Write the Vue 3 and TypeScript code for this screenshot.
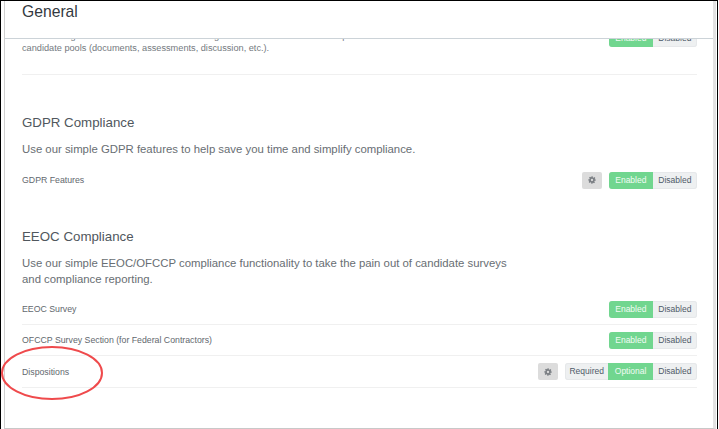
<script setup lang="ts">
interface Row {
  label: string
  options: string[]
  active: string
  gear?: boolean
}
const gdpr: Row[] = [{ label: 'GDPR Features', options: ['Enabled', 'Disabled'], active: 'Enabled', gear: true }]
const eeoc: Row[] = [
  { label: 'EEOC Survey', options: ['Enabled', 'Disabled'], active: 'Enabled' },
  { label: 'OFCCP Survey Section (for Federal Contractors)', options: ['Enabled', 'Disabled'], active: 'Enabled' },
  { label: 'Dispositions', options: ['Required', 'Optional', 'Disabled'], active: 'Optional', gear: true },
]
</script>

<template>
  <div class="frame">
    <div class="panel">
      <header class="head">General</header>
      <main class="content">
        <div class="intro">
          <p class="small wide">Enable hiring team members to view and manage all of the information in their private<br />candidate pools (documents, assessments, discussion, etc.).</p>
          <div class="group top">
            <button class="opt on">Enabled</button>
            <button class="opt">Disabled</button>
          </div>
        </div>

        <section class="sec gdpr">
          <h2>GDPR Compliance</h2>
          <p class="lead">Use our simple GDPR features to help save you time and simplify compliance.</p>
          <div v-for="r in gdpr" :key="r.label" class="row plain">
            <span class="small">{{ r.label }}</span>
            <div class="ctrl">
              <button v-if="r.gear" class="gear" aria-label="Settings">
                <svg viewBox="0 0 24 24" width="8" height="8"><path fill="#7b7f84" fill-rule="evenodd" d="M10 1h4l.6 3.2 1.9.8 2.7-1.8 2.8 2.8-1.8 2.7.8 1.9L23 10v4l-3.2.6-.8 1.9 1.8 2.7-2.8 2.8-2.7-1.8-1.9.8L14 23h-4l-.6-3.2-1.9-.8-2.7 1.8-2.8-2.8 1.8-2.7-.8-1.9L1 14v-4l3.2-.6.8-1.9-1.8-2.7 2.8-2.8 2.7 1.8 1.9-.8zM12 8.5a3.5 3.5 0 1 0 0 7 3.5 3.5 0 0 0 0-7z" /></svg>
              </button>
              <div class="group">
                <button v-for="o in r.options" :key="o" class="opt" :class="{ on: o === r.active }">{{ o }}</button>
              </div>
            </div>
          </div>
        </section>

        <section class="sec eeoc">
          <h2>EEOC Compliance</h2>
          <p class="lead">Use our simple EEOC/OFCCP compliance functionality to take the pain out of candidate surveys<br />and compliance reporting.</p>
          <div v-for="r in eeoc" :key="r.label" class="row" :class="{ tall: r.gear }">
            <span class="small">{{ r.label }}</span>
            <div class="ctrl">
              <button v-if="r.gear" class="gear" aria-label="Settings">
                <svg viewBox="0 0 24 24" width="8" height="8"><path fill="#7b7f84" fill-rule="evenodd" d="M10 1h4l.6 3.2 1.9.8 2.7-1.8 2.8 2.8-1.8 2.7.8 1.9L23 10v4l-3.2.6-.8 1.9 1.8 2.7-2.8 2.8-2.7-1.8-1.9.8L14 23h-4l-.6-3.2-1.9-.8-2.7 1.8-2.8-2.8 1.8-2.7-.8-1.9L1 14v-4l3.2-.6.8-1.9-1.8-2.7 2.8-2.8 2.7 1.8 1.9-.8zM12 8.5a3.5 3.5 0 1 0 0 7 3.5 3.5 0 0 0 0-7z" /></svg>
              </button>
              <div class="group">
                <button v-for="o in r.options" :key="o" class="opt" :class="{ on: o === r.active, narrow: o === 'Required' }">{{ o }}</button>
              </div>
            </div>
          </div>
        </section>
      </main>

      <svg class="circle" viewBox="0 0 104 56" width="104" height="56" aria-hidden="true">
        <ellipse cx="52" cy="28" rx="50" ry="26" fill="none" stroke="#ef4a4c" stroke-width="2" />
      </svg>
    </div>
  </div>
</template>

<style>
html, body { margin: 0; background: #fff; }
</style>

<style scoped>
.frame {
  width: 718px;
  height: 429px;
  box-sizing: border-box;
  border-top: 1px solid #000;
  border-left: 1px solid #000;
  border-right: 1px solid #000;
  padding-left: 3px;
  padding-right: 1px;
  background: #fff;
  font-family: "Liberation Sans", Arial, sans-serif;
  overflow: hidden;
}
.panel {
  position: relative;
  height: 100%;
  box-sizing: border-box;
  border-left: 1px solid #d0d0d0;
  border-right: 3px solid #e2e2e2;
  border-bottom: 1px solid #c8c8c8;
}
.head {
  position: absolute;
  top: 0;
  left: 0;
  right: 0;
  height: 38px;
  box-sizing: border-box;
  padding: 1px 0 0 17px;
  background: #fff;
  border-bottom: 1px solid #ccd3d8;
  font-size: 15.7px;
  line-height: 20px;
  color: #33393f;
  z-index: 1;
}
.content {
  padding: 21px 16px 0 17px;
}
.intro {
  display: flex;
  justify-content: space-between;
  align-items: flex-end;
  padding-bottom: 20px;
  border-bottom: 1px solid #f0f0f0;
  height: 32px;
  box-sizing: content-box;
}
.small {
  margin: 0;
  font-size: 8.75px;
  line-height: 13px;
  color: #62686e;
}
.small.wide {
  font-size: 9.2px;
  line-height: 12px;
  color: #74797e;
  white-space: nowrap;
}
.gdpr { margin-top: 40px; }
.eeoc { margin-top: 39px; }
h2 {
  margin: 0;
  font-size: 13.3px;
  font-weight: 400;
  line-height: 16px;
  color: #50575d;
}
.lead {
  margin: 10px 0 0;
  font-size: 11.37px;
  line-height: 16px;
  color: #686e73;
}
.row {
  display: flex;
  justify-content: space-between;
  align-items: center;
  height: 30px;
  border-bottom: 1px solid #f0f0f0;
}
.row.plain { border-bottom: none; margin-top: 13px; height: 20px; }
.eeoc .lead { margin-bottom: 7px; }
.row.tall { height: 31px; }
.row.tall .small { padding-top: 1px; }
.ctrl {
  display: flex;
  align-items: center;
  gap: 7px;
}
.gear {
  width: 20px;
  height: 17px;
  padding: 0;
  border: none;
  border-radius: 2px;
  background: #dcdcdc;
  display: flex;
  align-items: center;
  justify-content: center;
}
.group {
  display: flex;
  height: 17px;
  border-radius: 3px;
  background: #eef0f1;
  box-shadow: inset 0 0 0 1px #e6e8ea;
  overflow: hidden;
}
.group.top {
  align-self: flex-start;
  margin-top: 8px;
}
.opt {
  padding: 0 5.6px;
  border: none;
  background: transparent;
  font-family: inherit;
  font-size: 8.5px;
  line-height: 17px;
  color: #4e5a68;
}
.opt.narrow {
  padding: 0 4.5px;
}
.opt.on {
  background: #71d68f;
  color: #f2fbf4;
  padding: 0 6.3px;
}
.circle {
  position: absolute;
  left: -5px;
  top: 344px;
  z-index: 2;
}
</style>
